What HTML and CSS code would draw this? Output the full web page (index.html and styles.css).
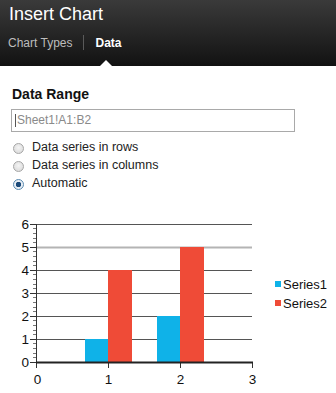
FILE: index.html
```html
<!DOCTYPE html>
<html>
<head>
<meta charset="utf-8">
<link rel="stylesheet" href="styles.css">
</head>
<body>
<div class="header">
  <div class="title">Insert Chart</div>
  <div class="tabs">
    <span class="tab">Chart Types</span>
    <span class="sep"></span>
    <span class="tab active">Data</span>
  </div>
  <span class="notch"></span>
</div>
<div class="content">
  <div class="section-title">Data Range</div>
  <div class="input"><span class="caret"></span>Sheet1!A1:B2</div>
  <div class="radios">
    <div class="radio-row"><span class="radio"></span><span class="label">Data series in rows</span></div>
    <div class="radio-row"><span class="radio"></span><span class="label">Data series in columns</span></div>
    <div class="radio-row"><span class="radio checked"></span><span class="label">Automatic</span></div>
  </div>
</div>
<svg class="chart" width="336" height="183" viewBox="0 210 336 183" xmlns="http://www.w3.org/2000/svg">
  <g stroke="#555" stroke-width="1">
    <line x1="36" y1="224.5" x2="252" y2="224.5"/>
    <line x1="36" y1="270.5" x2="252" y2="270.5"/>
    <line x1="36" y1="293.5" x2="252" y2="293.5"/>
    <line x1="36" y1="316.5" x2="252" y2="316.5"/>
    <line x1="36" y1="339.5" x2="252" y2="339.5"/>
  </g>
  <line x1="36" y1="247.5" x2="252" y2="247.5" stroke="#b4b4b4" stroke-width="2"/>
  <rect x="85" y="339" width="23" height="23" fill="#0fb2e8"/>
  <rect x="108" y="270" width="24" height="92" fill="#ef4b37"/>
  <rect x="157" y="316" width="23" height="46" fill="#0fb2e8"/>
  <rect x="180" y="247" width="24" height="115" fill="#ef4b37"/>
  <g stroke="#777" stroke-width="1">
    <line x1="33" y1="228.5" x2="36" y2="228.5"/><line x1="33" y1="233.5" x2="36" y2="233.5"/><line x1="33" y1="238.5" x2="36" y2="238.5"/><line x1="33" y1="242.5" x2="36" y2="242.5"/>
    <line x1="33" y1="251.5" x2="36" y2="251.5"/><line x1="33" y1="256.5" x2="36" y2="256.5"/><line x1="33" y1="261.5" x2="36" y2="261.5"/><line x1="33" y1="265.5" x2="36" y2="265.5"/>
    <line x1="33" y1="274.5" x2="36" y2="274.5"/><line x1="33" y1="279.5" x2="36" y2="279.5"/><line x1="33" y1="284.5" x2="36" y2="284.5"/><line x1="33" y1="288.5" x2="36" y2="288.5"/>
    <line x1="33" y1="297.5" x2="36" y2="297.5"/><line x1="33" y1="302.5" x2="36" y2="302.5"/><line x1="33" y1="307.5" x2="36" y2="307.5"/><line x1="33" y1="311.5" x2="36" y2="311.5"/>
    <line x1="33" y1="320.5" x2="36" y2="320.5"/><line x1="33" y1="325.5" x2="36" y2="325.5"/><line x1="33" y1="330.5" x2="36" y2="330.5"/><line x1="33" y1="334.5" x2="36" y2="334.5"/>
    <line x1="33" y1="343.5" x2="36" y2="343.5"/><line x1="33" y1="348.5" x2="36" y2="348.5"/><line x1="33" y1="353.5" x2="36" y2="353.5"/><line x1="33" y1="357.5" x2="36" y2="357.5"/>
  </g>
  <g stroke="#333" stroke-width="1">
    <line x1="30" y1="224.5" x2="36" y2="224.5"/>
    <line x1="30" y1="247.5" x2="36" y2="247.5"/>
    <line x1="30" y1="270.5" x2="36" y2="270.5"/>
    <line x1="30" y1="293.5" x2="36" y2="293.5"/>
    <line x1="30" y1="316.5" x2="36" y2="316.5"/>
    <line x1="30" y1="339.5" x2="36" y2="339.5"/>
    <line x1="30" y1="362.5" x2="36" y2="362.5"/>
    <line x1="36.5" y1="224" x2="36.5" y2="368"/>
    <line x1="108.5" y1="362" x2="108.5" y2="368"/>
    <line x1="180.5" y1="362" x2="180.5" y2="368"/>
    <line x1="252.5" y1="362" x2="252.5" y2="368"/>
  </g>
  <line x1="36" y1="362.5" x2="253" y2="362.5" stroke="#222" stroke-width="2"/>
  <g class="axis-label" text-anchor="end">
    <text x="29" y="229">6</text>
    <text x="29" y="252">5</text>
    <text x="29" y="275">4</text>
    <text x="29" y="298">3</text>
    <text x="29" y="321">2</text>
    <text x="29" y="344">1</text>
    <text x="29" y="367">0</text>
  </g>
  <g class="axis-label" text-anchor="middle">
    <text x="37.5" y="384">0</text>
    <text x="108.5" y="384">1</text>
    <text x="180.5" y="384">2</text>
    <text x="252.5" y="384">3</text>
  </g>
  <rect x="275" y="281" width="6" height="6" fill="#0fb2e8"/>
  <rect x="275" y="300" width="6" height="6" fill="#ef4b37"/>
  <text class="legend" x="283" y="289">Series1</text>
  <text class="legend" x="283" y="308">Series2</text>
</svg>
</body>
</html>
```
FILE: styles.css
```css
html, body {
  margin: 0;
  padding: 0;
  background: #fff;
  font-family: Arial, "Liberation Sans", sans-serif;
  width: 336px;
  height: 393px;
  overflow: hidden;
}
.header {
  position: relative;
  height: 66px;
  background: linear-gradient(#3a3a3a, #121212);
  box-sizing: border-box;
  padding: 3px 0 0 9px;
}
.title {
  color: #fff;
  font-size: 18px;
  line-height: 22px;
}
.tabs {
  display: flex;
  align-items: center;
  margin-top: 10px;
  margin-left: -1px;
}
.tab {
  color: #bdbdbd;
  font-size: 12px;
  line-height: 14px;
}
.tab.active {
  color: #fff;
  font-weight: bold;
}
.sep {
  width: 1px;
  height: 15px;
  background: #5a5a5a;
  margin: 0 11px 0 11px;
}
.notch {
  position: absolute;
  left: 100px;
  bottom: 0;
  width: 0;
  height: 0;
  border-left: 6px solid transparent;
  border-right: 6px solid transparent;
  border-bottom: 6px solid #fff;
}
.content {
  padding: 20px 0 0 11px;
}
.section-title {
  font-size: 14px;
  font-weight: bold;
  color: #111;
  line-height: 16px;
  padding-left: 1px;
}
.input {
  margin-top: 7px;
  width: 284px;
  height: 23px;
  box-sizing: border-box;
  border: 1px solid #a9a9a9;
  color: #8a8a8a;
  font-size: 12px;
  line-height: 21px;
  padding-left: 3px;
  display: flex;
  align-items: center;
}
.caret {
  width: 1px;
  height: 13px;
  background: #555;
  margin-right: 1px;
}
.radios {
  margin-top: 6px;
  display: flex;
  flex-direction: column;
}
.radio-row {
  display: flex;
  align-items: center;
  height: 18px;
}
.radio {
  width: 9px;
  height: 9px;
  border-radius: 50%;
  border: 1px solid #a6a6a6;
  background: radial-gradient(circle at 50% 40%, #f4f4f4, #d6d6d6);
  margin: 3px 8px 0 2px;
  box-sizing: content-box;
  position: relative;
}
.radio.checked {
  border-color: #5a8ab0;
  background: radial-gradient(circle, #1c4a7a 0 2.5px, #e8eef4 3px);
}
.label {
  font-size: 12.5px;
  color: #222;
  line-height: 14px;
}
.chart {
  display: block;
  margin-top: 18px;
}
.axis-label {
  font-family: Arial, "Liberation Sans", sans-serif;
  font-size: 13.5px;
  fill: #111;
}
.legend {
  font-family: Arial, "Liberation Sans", sans-serif;
  font-size: 13px;
  fill: #111;
}
```
